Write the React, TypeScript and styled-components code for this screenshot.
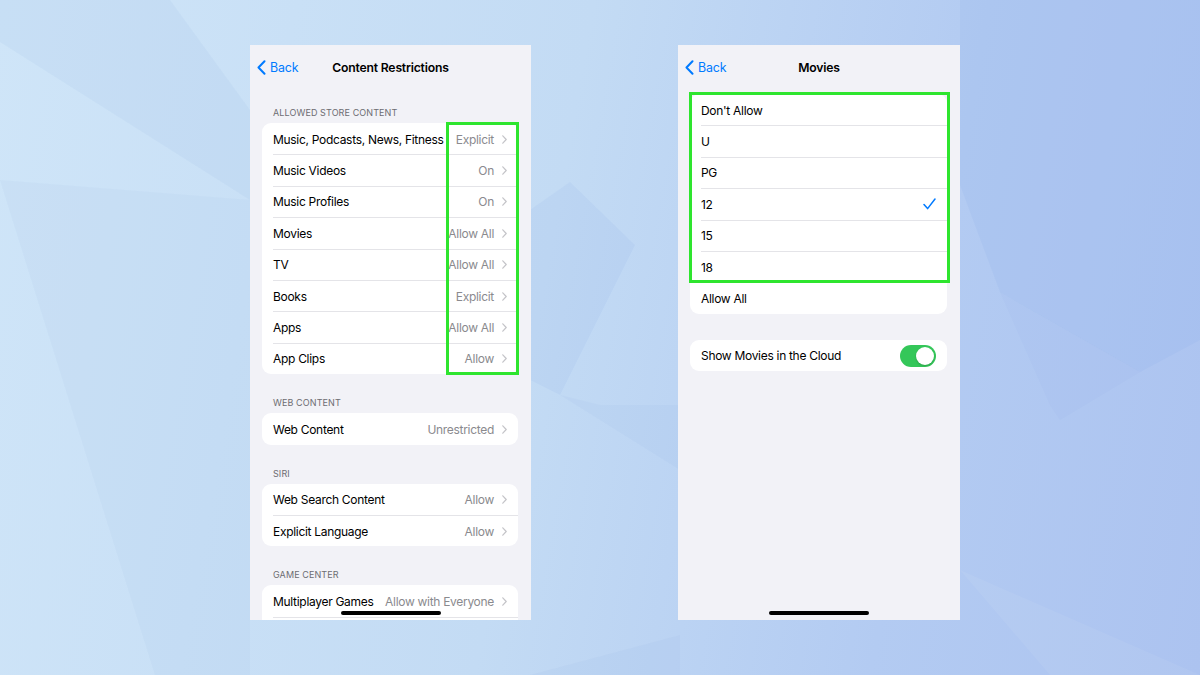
import React from 'react';
import styled, { createGlobalStyle } from 'styled-components';

const GlobalStyle = createGlobalStyle`
    html, body {
        margin: 0;
        padding: 0;
    }
    body {
        font-family: Inter, 'Liberation Sans', sans-serif;
        -webkit-font-smoothing: antialiased;
    }
`;

const Stage = styled.div`
    position: relative;
    width: 1200px;
    height: 675px;
    overflow: hidden;
    background: linear-gradient(100deg, #cfe5f8 0%, #c3dbf4 45%, #b3cbf2 75%, #acc3f0 100%);
`;

const Backdrop = styled.svg`
    position: absolute;
    inset: 0;
    width: 1200px;
    height: 675px;
`;

const Screens = styled.div`
    position: relative;
    display: flex;
    gap: 147px;
    padding: 45px 0 0 250px;
`;

const Phone = styled.div<{ $w: number }>`
    position: relative;
    width: ${(p) => p.$w}px;
    height: 575px;
    background: #f2f2f7;
    overflow: hidden;
    color: #000;
`;

const NavBar = styled.div`
    position: relative;
    height: 44px;
    display: flex;
    align-items: center;
    justify-content: center;
`;

const BackButton = styled.div`
    position: absolute;
    left: 7px;
    top: 0;
    height: 44px;
    display: flex;
    align-items: center;
    gap: 4px;
    color: #007aff;
    font-size: 12.4px;
    letter-spacing: -0.1px;
`;

const Title = styled.div`
    font-size: 12.2px;
    font-weight: 600;
    letter-spacing: -0.2px;
    margin-top: 1px;
`;

const Content = styled.div<{ $top: number }>`
    display: flex;
    flex-direction: column;
    padding: ${(p) => p.$top}px 13px 0 12px;
`;

const Section = styled.div`
    display: flex;
    flex-direction: column;
    & + & {
        margin-top: 22px;
    }
`;

const SectionHeader = styled.div`
    height: 12px;
    line-height: 12px;
    padding-left: 11px;
    margin: 1px 0 4px;
    font-size: 9px;
    color: #6d6d72;
    letter-spacing: 0.1px;
    text-transform: uppercase;
`;

const Card = styled.div<{ $gap?: number }>`
    position: relative;
    background: #fff;
    border-radius: 9px;
    margin-top: ${(p) => p.$gap || 0}px;
`;

const Row = styled.div`
    position: relative;
    height: 31.4px;
    display: flex;
    align-items: center;
    padding: 0 11px;
    font-size: 12px;
    letter-spacing: -0.3px;
    padding-top: 1px;
    box-sizing: border-box;
    & + &::before {
        content: '';
        position: absolute;
        top: 0;
        left: 11px;
        right: 0;
        height: 1px;
        background: #e4e4e8;
    }
`;

const Label = styled.div`
    flex: 1;
    white-space: nowrap;
`;

const Value = styled.div`
    color: #8a8a8e;
    white-space: nowrap;
    margin-right: 8px;
`;

const Highlight = styled.div<{ $l: number; $t: number; $r: number; $h: number }>`
    position: absolute;
    left: ${(p) => p.$l}px;
    top: ${(p) => p.$t}px;
    right: ${(p) => p.$r}px;
    height: ${(p) => p.$h}px;
    border: 3px solid #2ee52e;
    box-sizing: border-box;
    pointer-events: none;
`;

const Toggle = styled.div`
    width: 36px;
    height: 22px;
    border-radius: 11px;
    background: #34c759;
    position: relative;
    &::after {
        content: '';
        position: absolute;
        top: 2px;
        right: 2px;
        width: 18px;
        height: 18px;
        border-radius: 50%;
        background: #fff;
        box-shadow: 0 1px 2px rgba(0, 0, 0, 0.2);
    }
`;

const HomeIndicator = styled.div`
    position: absolute;
    left: 50%;
    bottom: 5px;
    width: 100px;
    height: 4px;
    margin-left: -50px;
    border-radius: 2px;
    background: #000;
`;

const BackChevron = () => (
    <svg width="9" height="15" viewBox="0 0 9 15">
        <path d="M7.5 1.2 L1.5 7.5 L7.5 13.8" fill="none" stroke="#007aff" strokeWidth="2" strokeLinecap="round" strokeLinejoin="round" />
    </svg>
);

const Chevron = () => (
    <svg width="5" height="9" viewBox="0 0 5 9">
        <path d="M0.8 0.8 L4.2 4.5 L0.8 8.2" fill="none" stroke="#c4c4c8" strokeWidth="1.2" strokeLinecap="round" strokeLinejoin="round" />
    </svg>
);

const Check = () => (
    <svg width="13" height="12" viewBox="0 0 13 12">
        <path d="M1 6.5 L4.6 10.6 L12 1" fill="none" stroke="#007aff" strokeWidth="1.5" strokeLinecap="round" strokeLinejoin="round" />
    </svg>
);

const SettingRow = (props: { label: string; value: string }) => (
    <Row>
        <Label>{props.label}</Label>
        <Value>{props.value}</Value>
        <Chevron />
    </Row>
);

const storeRows = [
    ['Music, Podcasts, News, Fitness', 'Explicit'],
    ['Music Videos', 'On'],
    ['Music Profiles', 'On'],
    ['Movies', 'Allow All'],
    ['TV', 'Allow All'],
    ['Books', 'Explicit'],
    ['Apps', 'Allow All'],
    ['App Clips', 'Allow'],
];

const ratings = ["Don't Allow", 'U', 'PG', '12', '15', '18', 'Allow All'];

function App() {
    return (
        <Stage>
            <GlobalStyle />
            <Backdrop viewBox="0 0 1200 675">
                <polygon points="0,0 170,0 250,110 250,200 0,42" fill="#9fbfe6" opacity="0.16" />
                <polygon points="0,180 250,200 250,675 155,675" fill="#9fbfe6" opacity="0.1" />
                <polygon points="530,210 570,182 635,245 560,395 530,380" fill="#8fb0e4" opacity="0.12" />
                <polygon points="600,405 680,405 680,470 560,395" fill="#8fb0e4" opacity="0.1" />
                <polygon points="960,0 1200,0 1200,340 1140,372 1000,292 960,185" fill="#8aa8ea" opacity="0.14" />
                <polygon points="1000,292 1140,372 1060,420 1050,405" fill="#8aa8ea" opacity="0.08" />
                <polygon points="960,570 1200,675 1050,675" fill="#ffffff" opacity="0.06" />
                <polygon points="530,675 680,635 680,675" fill="#8fb0e4" opacity="0.1" />
            </Backdrop>
            <Screens>
                <Phone $w={281}>
                    <NavBar>
                        <BackButton>
                            <BackChevron />
                            Back
                        </BackButton>
                        <Title>Content Restrictions</Title>
                    </NavBar>
                    <Content $top={17}>
                        <Section>
                            <SectionHeader>Allowed Store Content</SectionHeader>
                            <Card>
                                {storeRows.map(([l, v]) => (
                                    <SettingRow key={l} label={l} value={v} />
                                ))}
                                <Highlight $l={184} $t={-1} $r={-1} $h={253} />
                            </Card>
                        </Section>
                        <Section>
                            <SectionHeader>Web Content</SectionHeader>
                            <Card>
                                <SettingRow label="Web Content" value="Unrestricted" />
                            </Card>
                        </Section>
                        <Section>
                            <SectionHeader>Siri</SectionHeader>
                            <Card>
                                <SettingRow label="Web Search Content" value="Allow" />
                                <SettingRow label="Explicit Language" value="Allow" />
                            </Card>
                        </Section>
                        <Section>
                            <SectionHeader>Game Center</SectionHeader>
                            <Card>
                                <SettingRow label="Multiplayer Games" value="Allow with Everyone" />
                                <Row />
                            </Card>
                        </Section>
                    </Content>
                    <HomeIndicator />
                </Phone>
                <Phone $w={282}>
                    <NavBar>
                        <BackButton>
                            <BackChevron />
                            Back
                        </BackButton>
                        <Title>Movies</Title>
                    </NavBar>
                    <Content $top={5}>
                        <Card>
                            {ratings.map((r) => (
                                <Row key={r}>
                                    <Label>{r}</Label>
                                    {r === '12' && <Check />}
                                </Row>
                            ))}
                            <Highlight $l={-1} $t={-2} $r={-3} $h={191} />
                        </Card>
                        <Card $gap={26}>
                            <Row>
                                <Label>Show Movies in the Cloud</Label>
                                <Toggle />
                            </Row>
                        </Card>
                    </Content>
                    <HomeIndicator />
                </Phone>
            </Screens>
        </Stage>
    );
}

export default App;
